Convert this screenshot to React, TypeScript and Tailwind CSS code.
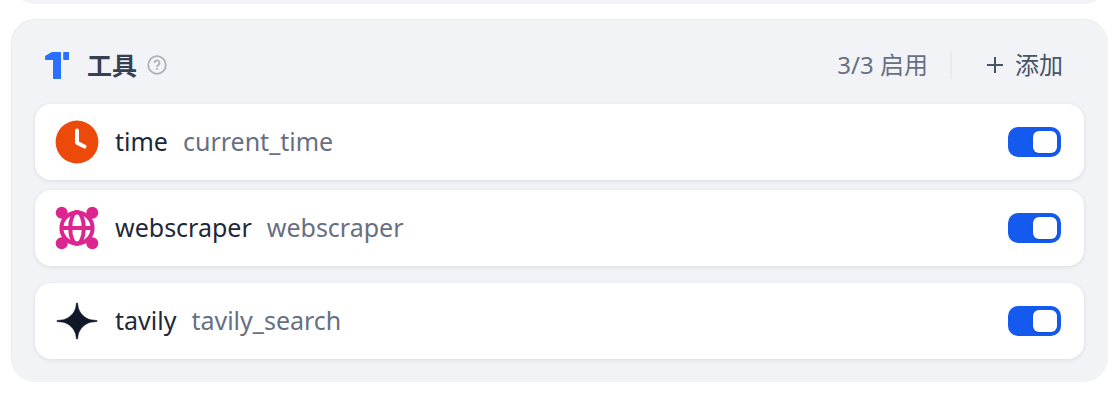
import { useState } from 'react'
import type { ReactNode } from 'react'

type Tool = {
  provider: string
  name: string
  icon: ReactNode
  className?: string
}

function ToolsLogo() {
  return (
    <svg viewBox="0 0 26 30" className="h-[30px] w-[26px]" fill="#2970ff" aria-hidden="true">
      <path d="M8.500 2h7.700q.8 0 .8.800v25.400q0 .8-.8.800H9.800q-.8 0-.8-.8V10H1.800q-.8 0-.8-.8V6.700q0-.6.500-.9L7.300 2.300Q7.800 2 8.500 2z" />
      <path d="M20 2h4.200q.8 0 .8.800v6.400q0 .8-.8.800H20q-.8 0-.8-.8V2.800q0-.8.8-.8z" />
    </svg>
  )
}

function HelpIcon() {
  return (
    <svg viewBox="0 0 20 20" className="size-5" fill="none" stroke="#acafb6" strokeWidth="1.800" aria-hidden="true">
      <circle cx="10" cy="10" r="8.800" />
      <path d="M7.500 7.900a2.500 2.500 0 1 1 3.900 2.100c-.9.600-1.400.9-1.400 1.900" />
      <path d="M10 12.900v1.800" />
    </svg>
  )
}

function PlusIcon() {
  return (
    <svg viewBox="0 0 16 16" className="size-4" fill="none" stroke="#475467" strokeWidth="2" aria-hidden="true">
      <path d="M8 0v16M0 8h16" />
    </svg>
  )
}

function ClockIcon() {
  return (
    <svg viewBox="0 0 44 44" className="size-11" aria-hidden="true">
      <circle cx="22" cy="22" r="21.400" fill="#ec4a0a" />
      <path d="M22 10.500v12.200l7.500 3.800" fill="none" stroke="#fff" strokeWidth="4" strokeLinecap="round" strokeLinejoin="round" />
    </svg>
  )
}

function ScraperIcon() {
  return (
    <svg viewBox="0 0 44 44" className="size-11" fill="#dd2590" aria-hidden="true">
      <circle cx="6.700" cy="6.700" r="6" />
      <circle cx="37.300" cy="6.700" r="6" />
      <circle cx="6.700" cy="37.300" r="6" />
      <circle cx="37.300" cy="37.300" r="6" />
      <g fill="none" stroke="#dd2590" strokeWidth="4">
        <circle cx="22" cy="22" r="15.600" fill="#fff" />
        <ellipse cx="22" cy="22" rx="6.800" ry="16" />
        <path d="M6.400 22h31.200" />
      </g>
    </svg>
  )
}

function StarIcon() {
  return (
    <svg viewBox="0 0 44 44" className="size-11" fill="#101828" aria-hidden="true">
      <path d="M21.500 4h1l.8 5C25 14.500 29.500 19 35.500 20.800l6.500.7v1l-6.500.7C29.500 25 25 29.500 23.300 35l-.8 5h-1l-.8-5C19 29.500 14.500 25 8.500 23.200L2 22.500v-1l6.500-.7C14.500 19 19 14.500 20.700 9z" strokeLinejoin="round" stroke="#101828" strokeWidth=".6" />
    </svg>
  )
}

const tools: Tool[] = [
  { provider: 'time', name: 'current_time', icon: <ClockIcon /> },
  { provider: 'webscraper', name: 'webscraper', icon: <ScraperIcon />, className: 'mt-2.5' },
  { provider: 'tavily', name: 'tavily_search', icon: <StarIcon />, className: 'mt-[17px]' },
]

export default function App() {
  const [enabled, setEnabled] = useState<string[]>(tools.map((tool) => tool.provider))

  const toggle = (provider: string) => {
    setEnabled((prev) =>
      prev.includes(provider) ? prev.filter((item) => item !== provider) : [...prev, provider],
    )
  }

  return (
    <main className="min-h-screen bg-white pl-[11px] pr-1.5 font-['Noto_Sans','Noto_Sans_CJK_SC',sans-serif]">
      <div className="h-1 overflow-hidden">
        <div className="-mt-11 h-12 rounded-3xl bg-[#f2f3f7]" />
      </div>
      <section className="mt-[15px] rounded-3xl border-l border-t border-[#e9ebf0] bg-[#f2f3f7] pb-[23px] pl-[23px] pr-6 pt-[23px]">
        <header className="flex h-11 items-center pl-[9px] pr-[21px]">
          <ToolsLogo />
          <h2 className="ml-[17px] text-[25px] font-bold leading-9 text-[#354052]">工具</h2>
          <button type="button" aria-label="帮助" className="ml-2.5">
            <HelpIcon />
          </button>
          <span className="ml-auto text-2xl text-[#676f83]">
            {enabled.length}/{tools.length} 启用
          </span>
          <span className="ml-[22px] h-7 w-0.5 bg-[#e9ebf0]" />
          <button type="button" className="ml-[35px] flex items-center gap-3 text-2xl text-[#495464]">
            <PlusIcon />
            添加
          </button>
        </header>

        <ul className="mt-[17px]">
          {tools.map((tool) => (
            <li key={tool.provider} className={tool.className}>
              <label className="flex h-[76px] items-center rounded-2xl bg-white pl-5 pr-[23px] shadow-[0_1px_4px_rgba(16,24,40,0.10)]">
                {tool.icon}
                <span className="ml-4 pb-0.5 text-[25px] leading-8 text-[#1d2939]">{tool.provider}</span>
                <span className="ml-[15px] pb-0.5 text-[25px] leading-8 text-[#676f83]">{tool.name}</span>
                <input
                  type="checkbox"
                  role="switch"
                  checked={enabled.includes(tool.provider)}
                  onChange={() => toggle(tool.provider)}
                  className="ml-auto flex h-[30px] w-[53px] cursor-pointer appearance-none items-center rounded-[10px] bg-gray-200 px-1 before:h-[22px] before:w-6 before:rounded-md before:bg-white before:shadow-sm checked:justify-end checked:bg-[#155aef]"
                />
              </label>
            </li>
          ))}
        </ul>
      </section>
    </main>
  )
}
